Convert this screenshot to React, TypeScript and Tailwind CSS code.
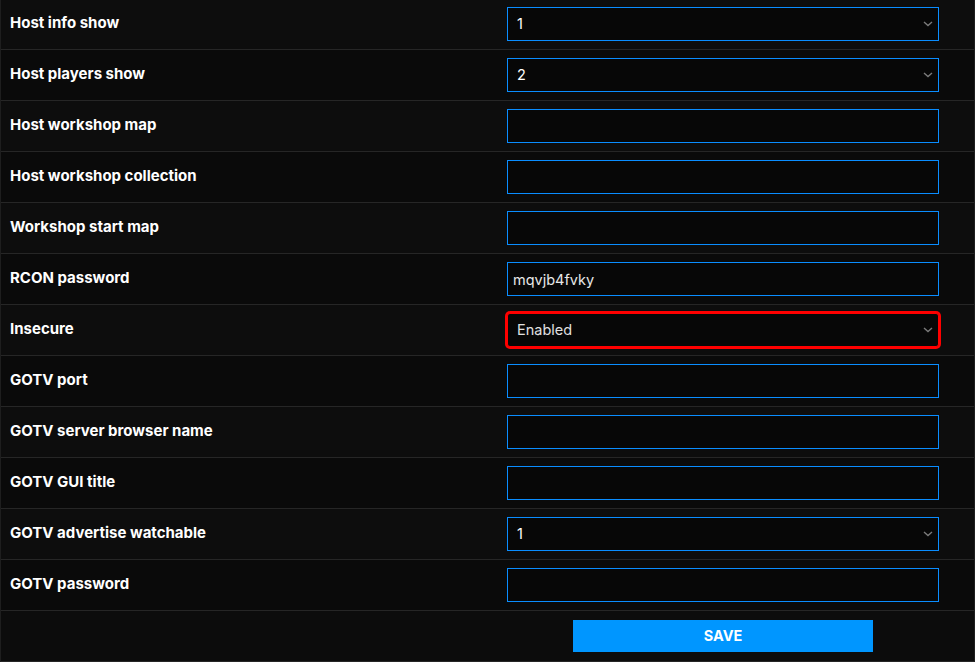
import { useState } from "react";

type Field = {
  label: string;
  kind: "select" | "text";
  value: string;
  focused?: boolean;
};

const FIELDS: Field[] = [
  { label: "Host info show", kind: "select", value: "1" },
  { label: "Host players show", kind: "select", value: "2" },
  { label: "Host workshop map", kind: "text", value: "" },
  { label: "Host workshop collection", kind: "text", value: "" },
  { label: "Workshop start map", kind: "text", value: "" },
  { label: "RCON password", kind: "text", value: "mqvjb4fvky" },
  { label: "Insecure", kind: "select", value: "Enabled", focused: true },
  { label: "GOTV port", kind: "text", value: "" },
  { label: "GOTV server browser name", kind: "text", value: "" },
  { label: "GOTV GUI title", kind: "text", value: "" },
  { label: "GOTV advertise watchable", kind: "select", value: "1" },
  { label: "GOTV password", kind: "text", value: "" },
];

function Chevron() {
  return (
    <svg width="10" height="6" viewBox="0 0 10 6" className="absolute right-[6px] top-1/2 -translate-y-1/2 pointer-events-none">
      <path d="M1 1l4 3.5L9 1" fill="none" stroke="#7a7a7a" strokeWidth="1.4" />
    </svg>
  );
}

export default function App() {
  const [values, setValues] = useState(FIELDS.map((f) => f.value));

  return (
    <div className="w-[975px] h-[662px] overflow-hidden bg-[#0b0b0b] text-white" style={{ fontFamily: "Inter, 'Open Sans', sans-serif" }}>
      <div className="-mt-[1px] border-l border-r border-[#1e1e1e]">
        {FIELDS.map((f, i) => (
          <div key={f.label} className={`flex items-center h-[51px] border-b border-[#262626] ${i % 2 === 0 ? "bg-[#0d0d0d]" : "bg-[#0a0a0a]"}`}>
            <div className="w-[506px] pl-[9px] pb-[1px] text-[15px] font-bold text-white">{f.label}</div>
            {f.kind === "select" ? (
              <div className="relative">
                <div
                  className={`w-[432px] h-[34px] flex items-center pl-[9px] text-[14.5px] bg-[#070707] border ${
                    f.focused ? "border-[#ff0000] ring-2 ring-[#ff0000] rounded-[3px] text-[#e0e0e0]" : "border-[#0a8dff] text-white"
                  }`}
                >
                  {values[i]}
                </div>
                <Chevron />
              </div>
            ) : (
              <input
                value={values[i]}
                onChange={(e) => setValues(values.map((v, j) => (j === i ? e.target.value : v)))}
                className="w-[432px] h-[34px] px-[5px] text-[14.5px] bg-[#070707] border border-[#0a8dff] text-[#e8e8e8] outline-none"
              />
            )}
          </div>
        ))}
        <div className="flex items-center h-[51px] border-b border-[#262626] bg-[#0c0c0c]">
          <div className="w-[506px]" />
          <div className="w-[432px] flex justify-center">
            <button className="w-[300px] h-[32px] bg-[#0096ff] text-white text-[14.5px] font-bold">SAVE</button>
          </div>
        </div>
      </div>
    </div>
  );
}
